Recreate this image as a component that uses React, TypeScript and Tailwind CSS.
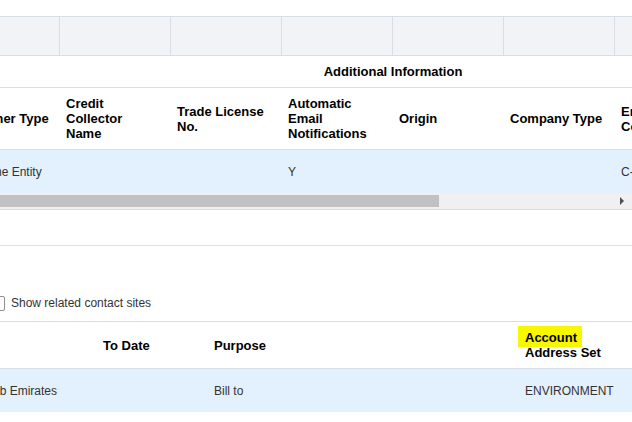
import React from "react";

const font = { fontFamily: '"Liberation Sans", Arial, sans-serif' };

export default function App() {
  const upperW = [106, 111, 111, 111, 111, 111, 111];
  const headers: React.ReactNode[] = [
    "Customer Type",
    <>Credit<br />Collector<br />Name</>,
    <>Trade License<br />No.</>,
    <>Automatic<br />Email<br />Notifications</>,
    "Origin",
    "Company Type",
    <>Entity<br />Code</>,
  ];
  const data = ["Same Entity", "", "", "Y", "", "", "C-100"];

  return (
    <div className="w-[632px] h-[422px] overflow-hidden bg-white text-black" style={font}>
      {/* upper table */}
      <div className="pt-[16px]">
        <div className="overflow-hidden">
          <div className="ml-[-46px] w-[1000px]">
            {/* gray band */}
            <div className="flex h-[40px] bg-[#f1f3f6] border-y border-[#d8dee6]">
              {upperW.map((w, i) => (
                <div key={i} className="shrink-0 border-r border-[#d8dee6]" style={{ width: w }} />
              ))}
            </div>
            {/* group row */}
            <div className="flex h-[32px] border-b border-[#d8dee6] items-center">
              <div className="shrink-0 w-[328px]" />
              <div className="shrink-0 w-[222px] text-center text-[13px] font-bold">Additional Information</div>
            </div>
            {/* header row */}
            <div className="flex h-[62px] border-b border-[#d8dee6]">
              {headers.map((h, i) => (
                <div
                  key={i}
                  className={
                    "shrink-0 flex items-center text-[13px] leading-[15px] font-bold whitespace-nowrap overflow-hidden " +
                    (i === 0 ? "pl-[1px]" : "px-[6px]")
                  }
                  style={{ width: upperW[i] }}
                >
                  <div>{h}</div>
                </div>
              ))}
            </div>
            {/* data row */}
            <div className="flex h-[43px] bg-[#e3f0fd]">
              {data.map((d, i) => (
                <div
                  key={i}
                  className={
                    "shrink-0 flex items-center text-[12px] text-[#333] whitespace-nowrap " +
                    (i === 0 ? "pl-[23px]" : "px-[6px]")
                  }
                  style={{ width: upperW[i] }}
                >
                  {d}
                </div>
              ))}
            </div>
          </div>
        </div>
        {/* scrollbar */}
        <div className="flex items-center h-[17px] bg-[#f0f0f0] border-b border-[#d8dee6]">
          <div className="w-[439px] h-[12px] bg-[#c1c1c1]" />
          <div className="flex-1" />
          <svg width="8" height="8" viewBox="0 0 8 8" className="mr-[6px]">
            <path d="M2 0 L6 4 L2 8 Z" fill="#505050" />
          </svg>
        </div>
      </div>

      {/* spacer section */}
      <div className="h-[36px] border-b border-[#d8dee6]" />

      {/* checkbox row */}
      <div className="h-[76px] border-b border-[#d8dee6] flex items-end pb-[10px]">
        <div className="ml-[-10px] w-[15px] h-[15px] border border-[#8f8f8f] rounded-[2px] bg-white" />
        <span className="ml-[6px] mb-[1px] text-[12px] text-[#333] leading-[14px]">Show related contact sites</span>
      </div>

      {/* lower table */}
      <div className="flex h-[47px] border-b border-[#d8dee6] text-[13px] font-bold leading-[15px]">
        <div className="w-[97px] shrink-0" />
        <div className="w-[111px] shrink-0 px-[6px] flex items-center">To Date</div>
        <div className="w-[311px] shrink-0 px-[6px] flex items-center">Purpose</div>
        <div className="flex-1 px-[6px] flex items-center">
          <div>
            <span className="bg-[#f7f700] pl-[7px] pr-[5px] ml-[-7px] pt-[4px] pb-[2px]">Account</span>
            <br />
            Address Set
          </div>
        </div>
      </div>
      <div className="flex h-[43px] bg-[#e3f0fd] text-[12px] text-[#333] items-center">
        <div className="w-[97px] shrink-0 overflow-hidden whitespace-nowrap flex justify-end">
          <span className="mr-[40px]">United Arab Emirates</span>
        </div>
        <div className="w-[111px] shrink-0 px-[6px]" />
        <div className="w-[311px] shrink-0 px-[6px]">Bill to</div>
        <div className="flex-1 px-[6px]">ENVIRONMENT</div>
      </div>
    </div>
  );
}
